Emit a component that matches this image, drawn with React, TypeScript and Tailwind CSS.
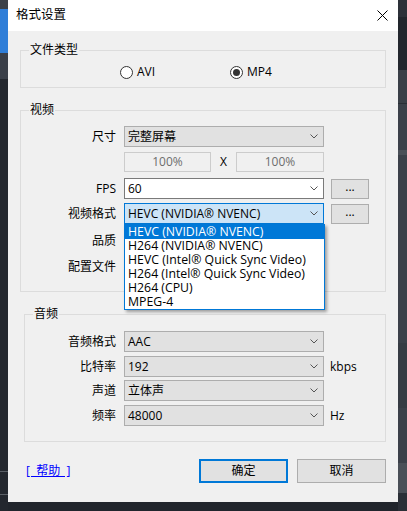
import React from 'react';

type Variant = 'gray' | 'white' | 'focus';

const comboStyles: Record<Variant, string> = {
  gray: 'bg-[#e1e1e1] border-[#adadad]',
  white: 'bg-white border-[#7a7a7a]',
  focus: 'bg-[#cce4f7] border-[#0078d7]',
};

const formats = [
  'HEVC (NVIDIA® NVENC)',
  'H264 (NVIDIA® NVENC)',
  'HEVC (Intel® Quick Sync Video)',
  'H264 (Intel® Quick Sync Video)',
  'H264 (CPU)',
  'MPEG-4',
];

function Chevron() {
  return (
    <svg width="8" height="5" viewBox="0 0 8 5" className="shrink-0">
      <path d="M0.5 0.5 L4 4 L7.5 0.5" fill="none" stroke="#555" strokeWidth="1" />
    </svg>
  );
}

function Combo({ value, variant = 'gray' }: { value: string; variant?: Variant }) {
  return (
    <div
      className={`w-[200px] h-[21px] border flex items-center pl-[3px] pr-[5px] text-black ${comboStyles[variant]}`}
    >
      <span className="flex-1 whitespace-nowrap leading-[17px]">{value}</span>
      <Chevron />
    </div>
  );
}

function Row({
  label,
  labelWidth,
  children,
  className = '',
}: {
  label: string;
  labelWidth: string;
  children?: React.ReactNode;
  className?: string;
}) {
  return (
    <div className={`flex items-center h-[21px] ${className}`}>
      <div className={`${labelWidth} text-right pr-[8px] shrink-0`}>{label}</div>
      {children}
    </div>
  );
}

function DotsButton() {
  return (
    <div className="ml-[7px] w-[38px] h-[20px] border border-[#adadad] bg-[#e1e1e1] flex items-center justify-center leading-none pb-[3px]">
      ...
    </div>
  );
}

function Radio({ label, checked }: { label: string; checked?: boolean }) {
  return (
    <div className="flex items-center gap-[4px]">
      <div className="w-[13px] h-[13px] rounded-full border border-[#333] bg-white flex items-center justify-center">
        {checked && <div className="w-[7px] h-[7px] rounded-full bg-[#333]" />}
      </div>
      <span>{label}</span>
    </div>
  );
}

export default function App() {
  return (
    <div className="w-[407px] h-[511px] bg-[#252a32] flex overflow-hidden font-['Open_Sans','Noto_Sans_CJK_SC',sans-serif] text-[12px] text-black">
      {/* app behind, left edge */}
      <div className="w-[8px] shrink-0 flex flex-col">
        <div className="h-[9px] bg-[#3c4149]" />
        <div className="h-[44px] bg-[#2f7ed8]" />
        <div className="h-[26px] bg-[#3a3f48]" />
        <div className="flex-1 bg-[#23272e]" />
        <div className="h-[1px] bg-[#5a5f66]" />
        <div className="h-[22px] bg-[#23272e]" />
        <div className="h-[1px] bg-[#5a5f66]" />
        <div className="h-[16px] bg-[#23272e]" />
      </div>

      <div className="w-[390px] shrink-0 flex flex-col">
        {/* dialog */}
        <div className="h-[502px] bg-[#f0f0f0] flex flex-col">
          <div className="h-[31px] bg-white flex items-center justify-between pl-[8px] pr-[10px] shrink-0">
            <span className="text-[12.5px]">格式设置</span>
            <svg width="11" height="11" viewBox="0 0 11 11">
              <path d="M0.5 0.5 L10.5 10.5 M10.5 0.5 L0.5 10.5" stroke="#000" strokeWidth="1" />
            </svg>
          </div>

          <div className="px-[12px] flex flex-col">
            {/* 文件类型 */}
            <fieldset className="mt-[11px] border border-[#dcdcdc] pb-[7px]">
              <legend className="ml-[8px] px-[1px] leading-[16px]">文件类型</legend>
              <div className="flex items-center h-[16px] mt-[6px] pl-[99px]">
                <div className="w-[110px]">
                  <Radio label="AVI" />
                </div>
                <Radio label="MP4" checked />
              </div>
            </fieldset>

            {/* 视频 */}
            <fieldset className="mt-[14px] border border-[#dcdcdc] pt-[8px] pb-[14px] flex flex-col">
              <legend className="ml-[8px] px-[1px] leading-[16px]">视频</legend>
              <Row label="尺寸" labelWidth="w-[103px]">
                <Combo value="完整屏幕" />
              </Row>
              <div className="flex items-center h-[20px] mt-[5px] pl-[103px]">
                <div className="w-[87px] h-[20px] border border-[#cccccc] bg-[#f0f0f0] flex items-center justify-center text-[#6d6d6d]">
                  100%
                </div>
                <div className="w-[25px] text-center">X</div>
                <div className="w-[88px] h-[20px] border border-[#cccccc] bg-[#f0f0f0] flex items-center justify-center text-[#6d6d6d]">
                  100%
                </div>
              </div>
              <Row label="FPS" labelWidth="w-[103px]" className="mt-[6px]">
                <Combo value="60" variant="white" />
                <DotsButton />
              </Row>
              <Row label="视频格式" labelWidth="w-[103px]" className="mt-[4px]">
                <div className="relative">
                  <Combo value="HEVC (NVIDIA® NVENC)" variant="focus" />
                  {/* open dropdown list */}
                  <div className="absolute top-full left-0 z-10 w-[201px] border border-[#0078d7] bg-white shadow-[2px_2px_3px_rgba(0,0,0,0.35)] flex flex-col">
                    {formats.map((f, i) => (
                      <div
                        key={f}
                        className={`h-[14px] leading-[14px] pl-[3px] whitespace-nowrap text-[12.3px] ${
                          i === 0 ? 'bg-[#0078d7] text-white' : 'text-black'
                        }`}
                      >
                        {f}
                      </div>
                    ))}
                  </div>
                </div>
                <DotsButton />
              </Row>
              <Row label="品质" labelWidth="w-[103px]" className="mt-[6px]">
                <Combo value="" />
              </Row>
              <Row label="配置文件" labelWidth="w-[103px]" className="mt-[5px]">
                <Combo value="" />
              </Row>
            </fieldset>

            {/* 音频 */}
            <fieldset className="mt-[14px] ml-[4px] border border-[#dcdcdc] pt-[9px] pb-[15px] flex flex-col">
              <legend className="ml-[8px] px-[1px] leading-[16px]">音频</legend>
              <Row label="音频格式" labelWidth="w-[99px]">
                <Combo value="AAC" />
              </Row>
              <Row label="比特率" labelWidth="w-[99px]" className="mt-[4px]">
                <Combo value="192" />
                <span className="ml-[6px]">kbps</span>
              </Row>
              <Row label="声道" labelWidth="w-[99px]" className="mt-[3px]">
                <Combo value="立体声" />
              </Row>
              <Row label="频率" labelWidth="w-[99px]" className="mt-[4px]">
                <Combo value="48000" />
                <span className="ml-[6px]">Hz</span>
              </Row>
            </fieldset>

            {/* footer */}
            <div className="mt-[17px] flex items-center">
              <a className="ml-[6px] text-[#0000ff] underline whitespace-pre">{'[  帮助  ]'}</a>
              <div className="ml-auto flex gap-[9px]">
                <div className="w-[89px] h-[24px] border-2 border-[#0078d7] bg-[#e1e1e1] flex items-center justify-center">
                  确定
                </div>
                <div className="w-[89px] h-[24px] border border-[#adadad] bg-[#e1e1e1] flex items-center justify-center">
                  取消
                </div>
              </div>
            </div>
          </div>
        </div>
        <div className="flex-1 bg-[#21252c]" />
      </div>

      {/* app behind, right edge */}
      <div className="w-[9px] shrink-0 flex flex-col">
        <div className="h-[17px] bg-[#2d3139]" />
        <div className="h-[53px] bg-[#22262d]" />
        <div className="h-[33px] bg-[#3a3f47]" />
        <div className="h-[1px] bg-[#2a2e35]" />
        <div className="h-[46px] bg-[#3b4049]" />
        <div className="h-[5px] bg-[#4a4f57]" />
        <div className="h-[188px] bg-[#3b4049]" />
        <div className="h-[65px] bg-[#363b43]" />
        <div className="h-[55px] bg-[#3b4049]" />
        <div className="h-[30px] bg-[#4a4f57]" />
        <div className="flex-1 bg-[#2b2f37]" />
      </div>
    </div>
  );
}
